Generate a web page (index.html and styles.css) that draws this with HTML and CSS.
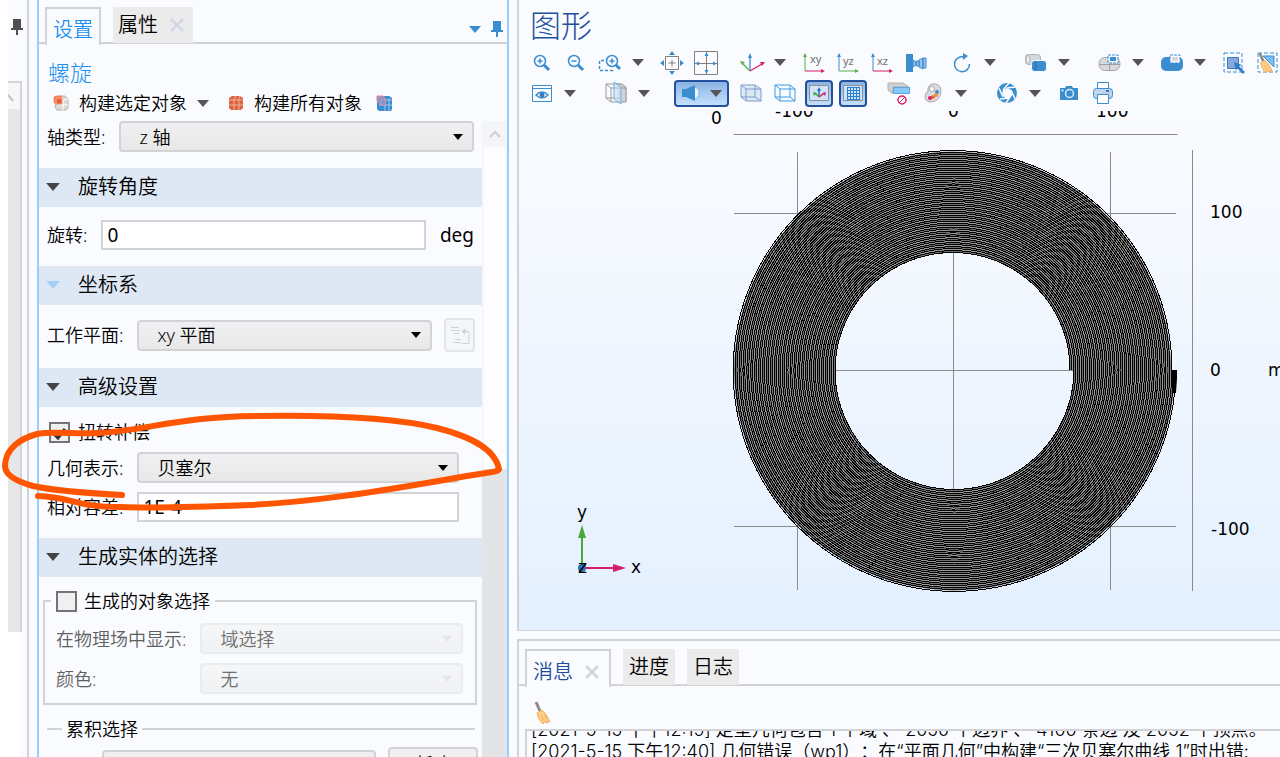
FILE: index.html
```html
<!DOCTYPE html>
<html lang="zh-CN">
<head>
    <meta charset="UTF-8">
    <meta name="viewport" content="width=device-width, initial-scale=1.0">
    <title>螺旋</title>
    <link rel="stylesheet" href="styles.css">
</head>
<body>

<svg class="defs" width="0" height="0">
    <symbol id="caret" viewBox="0 0 12 7"><path d="M0 0h12l-6 7z" fill="currentColor"/></symbol>
    <symbol id="pin" viewBox="0 0 12 16"><path d="M2 0h8v9h2v2H7v5H5v-5H0V9h2z" fill="currentColor"/></symbol>
    <symbol id="cross" viewBox="0 0 14 14"><path d="M1 1l12 12M13 1L1 13" stroke="#d0d8e4" stroke-width="2.5"/></symbol>
    <symbol id="broom" viewBox="0 0 20 24">
        <path d="M3 1l4 9" stroke="#8c8c8c" stroke-width="3"/>
        <path d="M4 12l5-3q5 4 8 12l-3-1 1 2-4-1-1 2q-5-4-6-11z" fill="#ffcf87" stroke="#f4b060"/>
        <path d="M8 14l3 6M11 13l3 5" stroke="#f4b060"/>
    </symbol>
</svg>

<div class="app">
    <aside class="side">
        <svg class="side-pin" width="12" height="16"><use href="#pin"/></svg>
        <div class="side-scroll">
            <svg width="12" height="26" viewBox="0 0 12 26"><path d="M0 12l5 6" stroke="#c4c4c6" stroke-width="2"/></svg>
        </div>
    </aside>

    <section class="settings">
        <div class="tabs">
            <button type="button" class="tab active blue">设置</button>
            <button type="button" class="tab">属性<svg width="14" height="14"><use href="#cross"/></svg></button>
            <div class="tab-tools">
                <svg width="12" height="7"><use href="#caret"/></svg>
                <svg width="12" height="16"><use href="#pin"/></svg>
            </div>
        </div>
        <h1>螺旋</h1>
        <div class="build-bar">
            <button type="button">
                <svg width="16" height="16" viewBox="0 0 16 16">
                    <path d="M5 1h7l3 3v9l-2 2H4l-2-3z" fill="#dadad6" stroke="#b4b4b0"/>
                    <path d="M6 10h9M10 5v10M10 5l5-1" stroke="#fff"/>
                    <path d="M1 2l2-1h6v8H3L1 8z" fill="#e86030" stroke="#f4a080"/>
                    <path d="M3 3h6M3 3v6" stroke="#f8b8a0"/>
                </svg>
                构建选定对象
                <svg class="gray" width="12" height="7"><use href="#caret"/></svg>
            </button>
            <button type="button">
                <svg width="16" height="16" viewBox="0 0 16 16">
                    <path d="M1 3l3-2h8l3 2v10l-2 2H3l-2-2z" fill="#dc6440"/>
                    <path d="M1 5h14M1 10h14M6 4v11M11 4v11M6 4l2-3M11 4l1-3" stroke="#f4ad98"/>
                </svg>
                构建所有对象
            </button>
            <button type="button" aria-label="显示">
                <svg width="16" height="16" viewBox="0 0 16 16">
                    <path d="M1 3l3-2h9l3 2v11l-1 2H3l-2-2z" fill="#3a8ed0"/>
                    <path d="M3 5h13M3 10h13M9 3v13M13 3v13" stroke="#9cc8ee"/>
                    <path d="M1 1h6l2 2v7H5L1 6z" fill="#6f9fd0" stroke="#f08098"/>
                    <path d="M1 1l4 3v6M5 4h4" stroke="#f08098" fill="none"/>
                </svg>
            </button>
        </div>

        <div class="scroller">
            <form class="form">
                <div class="row">
                    <label for="axis">轴类型:</label>
                    <select id="axis"><option>z 轴</option></select>
                </div>
                <h2><svg width="14" height="8"><use href="#caret"/></svg>旋转角度</h2>
                <div class="row">
                    <label for="rotation">旋转:</label>
                    <input type="text" id="rotation" value="0">
                    <span class="unit">deg</span>
                </div>
                <h2 class="collapsed"><svg width="14" height="8"><use href="#caret"/></svg>坐标系</h2>
                <div class="row">
                    <label for="plane">工作平面:</label>
                    <select id="plane"><option>xy 平面</option></select>
                    <button type="button" class="goto" aria-label="转到源" disabled>
                        <svg width="20" height="20" viewBox="0 0 20 20" fill="none" stroke="#d2d3d5">
                            <path d="M1 2.500h8M1 5.500h9M3 8.500h6M5 14.500h6M3 17.500h8M14 6.500h5v12h-7"/>
                            <path d="M15 4v5l-3-2.500z" fill="#d2d3d5"/>
                        </svg>
                    </button>
                </div>
                <h2><svg width="14" height="8"><use href="#caret"/></svg>高级设置</h2>
                <div class="row check">
                    <input type="checkbox" id="twist" checked>
                    <label for="twist">扭转补偿</label>
                </div>
                <div class="row short">
                    <label for="repr">几何表示:</label>
                    <select id="repr"><option>贝塞尔</option></select>
                </div>
                <div class="row short tight">
                    <label for="tol">相对容差:</label>
                    <input type="text" id="tol" value="1E-4">
                </div>
                <h2><svg width="14" height="8"><use href="#caret"/></svg>生成实体的选择</h2>
                <fieldset class="box">
                    <legend>
                        <input type="checkbox" id="objsel">
                        <label for="objsel">生成的对象选择</label>
                    </legend>
                    <div class="pair">
                        <label for="show">在物理场中显示:</label>
                        <select id="show" disabled><option>域选择</option></select>
                        <label for="color">颜色:</label>
                        <select id="color" disabled><option>无</option></select>
                    </div>
                </fieldset>
                <fieldset class="line">
                    <legend>累积选择</legend>
                    <div class="accum">
                        <select aria-label="贡献于"><option>无</option></select>
                        <button type="button">新建</button>
                    </div>
                </fieldset>
            </form>
            <div class="scrollbar">
                <div class="sb-up"><svg width="12" height="8" viewBox="0 0 12 8"><path d="M1 7l5-5 5 5" fill="none" stroke="#cfcfd1" stroke-width="2"/></svg></div>
                <div class="sb-thumb"></div>
            </div>
        </div>
    </section>

    <main class="main">
        <section class="graphics">
            <h1>图形</h1>
            <div class="toolbar">
                <button type="button" aria-label="放大"><svg width="18" height="18" viewBox="0 0 18 18" class="ln"><circle cx="7" cy="7" r="5.500"/><path d="M4.500 7h5M7 4.500v5"/><path d="M11 11l5 5" stroke-width="3"/></svg></button>
                <button type="button" aria-label="缩小"><svg width="18" height="18" viewBox="0 0 18 18" class="ln"><circle cx="7" cy="7" r="5.500"/><path d="M4.500 7h5"/><path d="M11 11l5 5" stroke-width="3"/></svg></button>
                <button type="button" aria-label="缩放框"><svg width="24" height="18" viewBox="0 0 24 18" class="ln"><path d="M6 6.500H1.500v10h13V14" stroke-dasharray="3 2"/><circle cx="14" cy="7" r="5.500"/><path d="M11.500 7h5M14 4.500v5"/><path d="M18 11l4 4" stroke-width="3"/></svg></button>
                <button type="button" class="menu" aria-label="更多"><svg width="12" height="7"><use href="#caret"/></svg></button>
                <button type="button" aria-label="切换"><svg width="24" height="24" viewBox="0 0 24 24"><path d="M12 0l3 4H9zM12 24l3-4H9zM0 12l4-3v6zM24 12l-4-3v6z" fill="#3a8ed0"/><path d="M5.500 5.500h13v13h-13zM8.500 12h7M12 8.500v7" fill="none" stroke="#808080"/></svg></button>
                <button type="button" aria-label="缩放到窗口大小"><svg width="24" height="24" viewBox="0 0 24 24"><path d="M.5.5h23v23H.5z" fill="none" stroke="#808080"/><path d="M12.500 1v22M1 12.500h22" stroke="#808080"/><path d="M12.500 1l2 4h-4zM12.500 23l2-4h-4zM1 12.500l4-2v4zM23 12.500l-4-2v4z" fill="#3a8ed0"/></svg></button>
                <i class="sep"></i>
                <button type="button" aria-label="默认视图"><svg width="26" height="20" viewBox="0 0 26 20"><path d="M11 18V3" stroke="#3a8ed0" stroke-width="1.300"/><path d="M11 0l2 5H9z" fill="#3a8ed0"/><path d="M11 18l-8-8" stroke="#58b04c" stroke-width="1.300"/><path d="M1 8l5 1-3 3z" fill="#58b04c"/><path d="M11 18l12-7" stroke="#d81e68" stroke-width="1.300"/><path d="M26 9l-3 4-2-4z" fill="#d81e68"/></svg></button>
                <button type="button" class="menu" aria-label="更多"><svg width="12" height="7"><use href="#caret"/></svg></button>
                <button type="button" aria-label="xy 视图"><svg width="22" height="20" viewBox="0 0 22 20"><path d="M2 18V3" stroke="#58b04c"/><path d="M2 0l2 4H0z" fill="#58b04c"/><path d="M2 18h17" stroke="#d81e68"/><path d="M22 18l-4 2v-4z" fill="#d81e68"/><text x="7" y="10">xy</text></svg></button>
                <button type="button" aria-label="yz 视图"><svg width="22" height="20" viewBox="0 0 22 20"><path d="M2 18V3" stroke="#3a8ed0"/><path d="M2 0l2 4H0z" fill="#3a8ed0"/><path d="M2 18h17" stroke="#58b04c"/><path d="M22 18l-4 2v-4z" fill="#58b04c"/><text x="6" y="12">yz</text></svg></button>
                <button type="button" aria-label="xz 视图"><svg width="22" height="20" viewBox="0 0 22 20"><path d="M2 18V3" stroke="#3a8ed0"/><path d="M2 0l2 4H0z" fill="#3a8ed0"/><path d="M2 18h17" stroke="#d81e68"/><path d="M22 18l-4 2v-4z" fill="#d81e68"/><text x="6" y="12">xz</text></svg></button>
                <button type="button" aria-label="相机"><svg width="20" height="18" viewBox="0 0 20 18"><path d="M0 0h7v18H0z" fill="#3a8ed0"/><path d="M7 6l3 2v3l-3 2zM10 7h3v5h-3zM13 6l4-2v11l-4-2zM17 4h3v10h-3z" fill="#9dc0ea" stroke="#3a8ed0"/></svg></button>
                <i class="sep"></i>
                <button type="button" aria-label="旋转"><svg width="18" height="20" viewBox="0 0 18 20"><path d="M11 4a7.500 7.500 0 1 0 5.500 7" fill="none" stroke="#3a8ed0" stroke-width="1.500"/><path d="M10 0l5 3-5 4z" fill="#3a8ed0"/></svg></button>
                <button type="button" class="menu" aria-label="更多"><svg width="12" height="7"><use href="#caret"/></svg></button>
                <i class="sep"></i>
                <button type="button" aria-label="选择"><svg width="22" height="18" viewBox="0 0 22 18"><rect x=".5" y=".5" width="15" height="10" rx="3" fill="#d8d9db" stroke="#b0b1b3"/><ellipse cx="3" cy="5.500" rx="2" ry="4" fill="#eee" stroke="#b0b1b3"/><rect x="6.500" y="6.500" width="15" height="11" rx="3" fill="#3a8ed0" stroke="#fafbff"/><path d="M10 8q2 4 0 8" stroke="#2468a8" fill="none"/></svg></button>
                <button type="button" class="menu" aria-label="更多"><svg width="12" height="7"><use href="#caret"/></svg></button>
                <i class="sep"></i>
                <button type="button" aria-label="隐藏"><svg width="24" height="18" viewBox="0 0 24 18"><rect x="1" y="3.500" width="21" height="13" rx="6" fill="#d8d9db" stroke="#a8a9ab"/><path d="M1 10.500h21M11.500 10.500v6" stroke="#a0a0a0"/><rect x="10" y="1" width="10" height="8" fill="#fafbff" stroke="#3a8ed0" stroke-dasharray="3 1"/><path d="M12 3h6v4h-6z" fill="#3a8ed0"/></svg></button>
                <button type="button" class="menu" aria-label="更多"><svg width="12" height="7"><use href="#caret"/></svg></button>
                <button type="button" aria-label="显示选定"><svg width="24" height="18" viewBox="0 0 24 18"><rect x="1" y="3" width="22" height="14" rx="5" fill="#3a8ed0"/><rect x="10" y="1" width="10" height="8" fill="#fafbff" stroke="#3a8ed0" stroke-dasharray="3 1"/><path d="M12 3h6v4h-6z" fill="#d8d9db"/></svg></button>
                <button type="button" class="menu" aria-label="更多"><svg width="12" height="7"><use href="#caret"/></svg></button>
                <button type="button" aria-label="框选"><svg width="22" height="22" viewBox="0 0 22 22"><path d="M1 1h18v19H1z" fill="none" stroke="#3a8ed0" stroke-dasharray="4 2"/><path d="M4.500 5.500h11v11h-11z" fill="#88a8dc" stroke="#3a78c0"/><path d="M11 10l8 3-3 1 6 6-2 2-6-6-1 3z" fill="#2c80c8"/></svg></button>
                <button type="button" aria-label="清除选择"><svg width="22" height="24" viewBox="0 0 22 24"><path d="M1 2h19v19H1z" fill="none" stroke="#3a8ed0" stroke-dasharray="4 2"/><path d="M6 5h11v11z" fill="#7cbcf0" stroke="#3a8ed0"/><use href="#broom" width="18" height="24"/></svg></button>
            </div>
            <div class="toolbar">
                <button type="button" aria-label="可见性"><svg width="20" height="17" viewBox="0 0 20 17"><path d="M.5.5h19v16H.5zM.5 3.500h19" fill="none" stroke="#3a8ed0"/><path d="M4 10q6-6 12 0-6 6-12 0z" fill="#fff" stroke="#3a8ed0" stroke-width="1.500"/><circle cx="10" cy="10" r="2.500" fill="#3a78b8"/></svg></button>
                <button type="button" class="menu" aria-label="更多"><svg width="12" height="7"><use href="#caret"/></svg></button>
                <i class="sep"></i>
                <button type="button" aria-label="裁剪"><svg width="22" height="22" viewBox="0 0 22 22"><path d="M11 1h6l5 4v15h-8z" fill="#d4d4d6"/><path d="M1 2h15l5 4v14H6l-5-4zM1 2l5 4h15M6 6v14M1 16h14" fill="none" stroke="#999"/><path d="M9 0l7 5v17l-7-5z" fill="#c8def4" fill-opacity=".6" stroke="#68b0ec"/></svg></button>
                <button type="button" class="menu" aria-label="更多"><svg width="12" height="7"><use href="#caret"/></svg></button>
                <i class="sep"></i>
                <button type="button" class="on wide" aria-label="场景光"><svg width="18" height="16" viewBox="0 0 18 16"><path d="M12 2q5 1 5 6t-5 6" fill="#eef6ff" stroke="#8cb8e8"/><path d="M0 4h4l9-4v16l-9-4H0z" fill="#3a8ed0"/></svg><svg width="12" height="7"><use href="#caret"/></svg></button>
                <button type="button" aria-label="透明"><svg width="22" height="18" viewBox="0 0 22 18"><path d="M1 1h14l6 4v12H6l-5-4z" fill="#dce8f6"/><path d="M1 1h14l6 4v12H6l-5-4zM1 1l5 4h15M6 5v12M1 13h14V1M15 13l6 4" fill="none" stroke="#7c9ccc"/></svg></button>
                <button type="button" aria-label="线框"><svg width="22" height="18" viewBox="0 0 22 18"><path d="M1 1h15l5 4v12H6l-5-4zM1 1l5 4h15M6 5v12M1 13h15V1M16 13l5 4" fill="none" stroke="#3a9ce4"/></svg></button>
                <button type="button" class="on" aria-label="显示轴方向"><svg width="20" height="18" viewBox="0 0 20 18"><path d="M.5 1.500h19v15H.5z" fill="#cfe4fb" stroke="#909090"/><path d="M10 13V6" stroke="#2c70b8" stroke-width="1.500"/><path d="M10 3l2 4H8z" fill="#2c70b8"/><path d="M10 13L6 9" stroke="#48a83c" stroke-width="1.500"/><path d="M4 8l4 1-3 3z" fill="#48a83c"/><path d="M10 13l4-3" stroke="#d81e68" stroke-width="1.500"/><path d="M17 8l-1 4-3-3z" fill="#d81e68"/></svg></button>
                <button type="button" class="on" aria-label="显示栅格"><svg width="20" height="18" viewBox="0 0 20 18"><path d="M.5 1.500h19v15H.5z" fill="#cfe4fb" stroke="#909090"/><path d="M4 3.500h12M4 6.500h12M4 9.500h12M4 12.500h12M4 15.500h12M4.500 3v13M7.500 3v13M10.500 3v13M13.500 3v13M16.500 3v13" stroke="#2c80d0"/></svg></button>
                <i class="sep"></i>
                <button type="button" aria-label="移除"><svg width="22" height="22" viewBox="0 0 22 22"><path d="M0 1h15l6 4H5v7l-5-4z" fill="#d0d0d2" stroke="#b0b0b2"/><path d="M5.500 5.500h16v6h-16z" fill="#86c8fa" stroke="#58a8e4"/><circle cx="14" cy="18" r="4" fill="#fff" stroke="#d81e68" stroke-width="1.500"/><path d="M11 21l6-6" stroke="#d81e68"/></svg></button>
                <button type="button" aria-label="颜色"><svg width="18" height="20" viewBox="0 0 18 20"><path d="M8 1q8-1 9 6 0 11-10 12-6 0-6-6 0-3 3-4-1-6 4-8z" fill="#dcdcde" stroke="#a8a8aa"/><circle cx="8" cy="6" r="2.500" fill="#fff" stroke="#aaa"/><circle cx="13" cy="9" r="2" fill="#3a8ed0"/><circle cx="12" cy="12" r="2" fill="#f09030"/><circle cx="9" cy="14" r="1.800" fill="#f05a28"/><circle cx="6" cy="15" r="2" fill="#d81e68"/></svg></button>
                <button type="button" class="menu" aria-label="更多"><svg width="12" height="7"><use href="#caret"/></svg></button>
                <i class="sep"></i>
                <button type="button" aria-label="快照"><svg width="20" height="20" viewBox="0 0 20 20"><circle cx="10" cy="10" r="10" fill="#3a8ed0"/><path d="M10 5l4 2 1 4-3 4-4 0-3-4 1-4z" fill="#fafbff"/><path d="M10 5L18 4M14 7l4 9M15 11l-6 9M12 15l-9 1M6 14L2 5M6 7l6-7" stroke="#fafbff" stroke-width="1.500"/></svg></button>
                <button type="button" class="menu" aria-label="更多"><svg width="12" height="7"><use href="#caret"/></svg></button>
                <button type="button" aria-label="图像"><svg width="18" height="14" viewBox="0 0 18 14"><path d="M0 2h5l1-2h6l1 2h5v12H0z" fill="#3a8ed0"/><circle cx="9.500" cy="7.500" r="4" fill="#3a8ed0" stroke="#d8ecfc" stroke-width="1.500"/><circle cx="2.500" cy="4.500" r="1" fill="#fff"/></svg></button>
                <button type="button" aria-label="打印"><svg width="20" height="22" viewBox="0 0 20 22"><path d="M4.500 8V.5h11V8" fill="#fff" stroke="#3a8ed0"/><rect x=".5" y="6.500" width="19" height="10" rx="3" fill="#c0d4ee" stroke="#3a8ed0"/><path d="M4.500 12.500h11v9h-11z" fill="#fff" stroke="#3a8ed0"/><path d="M13 8h3v2h-3z" fill="#3a78b8"/></svg></button>
            </div>
            <svg class="plot">
                <g class="grid">
                    <path d="M214.500 23.500h444M673.500 39v441M215 102.500h442M215 415.500h442M215 259.500h442"/>
                    <path d="M278.500 41v438M434.500 41v438M591.500 41v438"/>
                </g>
                <path id="band" fill="#707070"/>
                <path id="coil" fill="none" stroke="#000" shape-rendering="crispEdges"/>
                <path id="gleam" fill="none" stroke="#d8d8d8" shape-rendering="crispEdges"/>
                <path d="M653 259h5v8l-1 15h-4z"/>
                <g class="ticks">
                    <text x="192" y="13">0</text>
                    <text x="256" y="6">-100</text>
                    <text x="429" y="6">0</text>
                    <text x="577" y="6">100</text>
                    <text x="691" y="107">100</text>
                    <text x="691" y="265">0</text>
                    <text x="692" y="424">-100</text>
                    <text x="749" y="265">m</text>
                    <text x="58" y="407">y</text>
                    <text x="112" y="462">x</text>
                </g>
                <path d="M63 456v-31" stroke="#48a83c" stroke-width="2"/>
                <path d="M63 414l4 13h-8z" fill="#48a83c"/>
                <path d="M63 457h33" stroke="#d81e68" stroke-width="2"/>
                <path d="M107 457l-13 4v-8z" fill="#d81e68"/>
                <circle cx="63" cy="457" r="4" fill="#2c70b8"/>
                <text class="z" x="59" y="462">z</text>
            </svg>
        </section>

        <section class="messages">
            <div class="tabs">
                <button type="button" class="tab active navy">消息<svg width="14" height="14"><use href="#cross"/></svg></button>
                <button type="button" class="tab">进度</button>
                <button type="button" class="tab">日志</button>
            </div>
            <button type="button" class="clear" aria-label="清除"><svg width="20" height="24"><use href="#broom"/></svg></button>
            <div class="log">
                <p>[2021-5-15 下午12:19] 定型几何包含 1 个域 、 2050 个边界 、 4100 条边 及 2052 个顶点。</p>
                <p>[2021-5-15 下午12:40] 几何错误（wp1）：在“平面几何”中构建“三次贝塞尔曲线 1”时出错:</p>
            </div>
        </section>
    </main>
</div>

<svg class="mark" width="510" height="530">
    <path d="M122 495C85 493 55 491 33 486C15 481 5 475 5 466C5 448 22 438 37 434C50 431 75 434 97 433C145 431 180 416 260 416C330 415 395 418 437 428C480 439 496 453 499 469C499 472 490 472 450 479C370 493 310 502 250 505C200 507 150 508 120 507C75 507 72 497 38 496"/>
</svg>

<script src="script.js"></script>
</body>
</html>
```
FILE: styles.css
```css
* {
    box-sizing: border-box;
}
body {
    margin: 0;
    background: #fafbff;
    color: #000;
    font-family: "Noto Sans", "Noto Sans CJK SC", sans-serif;
    font-size: 18px;
    line-height: 24px;
    font-weight: 350;
}
button,
input,
select {
    font: inherit;
    color: inherit;
}
button {
    border: none;
    background: none;
    padding: 0;
}
svg {
    flex: none;
}
h1,
h2,
p {
    margin: 0;
    font-weight: inherit;
}
h1 {
    font-weight: 300;
}
.defs {
    position: absolute;
}
.app {
    display: flex;
    gap: 8px;
    height: 100vh;
    overflow: hidden;
}

/* strip on the far left */
.side {
    width: 29px;
    flex: none;
    border-left: 8px solid #fff;
    border-right: 2px solid #d2d3d6;
    display: flex;
    flex-direction: column;
}
.side-pin {
    color: #505050;
    margin: 19px 3px 46px;
}
.side-scroll {
    width: 14px;
    height: 551px;
    background: #e7e7e7;
    border-top: 2px solid #d2d3d6;
    border-right: 2px solid #d2d3d6;
}
.side-scroll svg {
    display: block;
    background: #f7f7f8;
}
.side::after {
    content: "";
    flex: 1;
    width: 12px;
    background: #fff;
}

/* tabs */
.tabs {
    display: flex;
    gap: 12px;
    align-items: flex-start;
    border-bottom: 2px solid #d2d3d6;
    padding: 7px 4px 0 6px;
    height: 44px;
}
.tab {
    display: flex;
    align-items: center;
    gap: 12px;
    height: 36px;
    padding: 0 5px;
    background: #ebebeb;
    font-size: 20px;
}
.tab.active {
    height: 38px;
    padding: 6px 6px 0;
    background: #fafbff;
    border: 2px solid #d2d3d6;
    border-bottom: none;
}
.tab svg {
    margin-right: 4px;
}
.blue {
    color: #1e90f0;
}
.navy {
    color: #1e4f9c;
}
.tab-tools {
    display: flex;
    align-items: center;
    gap: 10px;
    margin-left: auto;
    padding-top: 14px;
    color: #3a8ed0;
}

/* settings */
.settings {
    width: 472px;
    flex: none;
    display: flex;
    flex-direction: column;
    border-left: 2px solid #99cdfb;
    border-right: 2px solid #99cdfb;
}
.settings h1 {
    padding: 12px 9px 0;
    font-size: 22px;
    line-height: 32px;
    color: #1e90f0;
}
.build-bar {
    display: flex;
    gap: 19px;
    padding: 0 15px 3px 14px;
    height: 33px;
    align-items: center;
}
.build-bar button {
    display: flex;
    align-items: center;
    gap: 10px;
}
.build-bar button + button + button {
    margin-left: -5px;
}
.gray {
    color: #555;
}
.scroller {
    flex: 1;
    display: flex;
    min-height: 0;
    overflow: hidden;
}
.form {
    flex: 1;
    min-width: 0;
}
.row {
    display: flex;
    align-items: center;
    gap: 14px;
    padding: 0 8px;
    margin: 13px 0 16px;
}
.row:first-child {
    margin-top: 0;
}
.row.check {
    gap: 8px;
    margin: 13px 0 8px;
    padding-left: 10px;
}
.row.short {
    padding-right: 23px;
    margin: 0 0 9px;
}
.row.tight {
    margin-bottom: 16px;
}
select,
input[type="text"] {
    flex: 1;
    min-width: 0;
    height: 31px;
    border: 2px solid #d2d3d6;
    border-radius: 0;
    background: #fff;
    padding: 0 4px;
}
input[type="text"] {
    height: 30px;
    font-size: 19px;
    font-weight: 400;
}
.unit {
    font-size: 19px;
    font-weight: 400;
}
select {
    appearance: none;
    padding: 0 18px;
    border-radius: 4px;
    background: url("data:image/svg+xml,%3Csvg xmlns='http://www.w3.org/2000/svg' width='10' height='6'%3E%3Cpath d='M0 0h10l-5 6z'/%3E%3C/svg%3E") no-repeat right 9px center, linear-gradient(#f0f0f2, #e8e8e8);
}
select:disabled {
    color: #707070;
    opacity: 1;
    border-color: #ebecee;
    background: url("data:image/svg+xml,%3Csvg xmlns='http://www.w3.org/2000/svg' width='10' height='6'%3E%3Cpath d='M0 0h10l-5 6z' fill='%23e4e5e7'/%3E%3C/svg%3E") no-repeat right 9px center, linear-gradient(#f5f6f8, #f1f2f3);
}
.form h2 {
    display: flex;
    align-items: center;
    gap: 18px;
    height: 39px;
    padding: 0 7px 1px;
    background: #dee8f4;
    font-size: 20px;
}
.form h2 svg {
    color: #454545;
}
.form h2.collapsed svg {
    color: #a4d0f8;
}
.goto {
    width: 31px;
    height: 34px;
    margin: 0 -1px 0 -2px;
    border: 2px solid #e4e5e7;
    border-radius: 4px;
    background: #f5f6f8;
    display: flex;
    align-items: center;
    justify-content: center;
}
input[type="checkbox"] {
    appearance: none;
    flex: none;
    width: 21px;
    height: 21px;
    margin: 0;
    border: 2px solid #747474;
    background: #f0f0f0;
}
input[type="checkbox"]:checked {
    background: #f0f0f0 url("data:image/svg+xml,%3Csvg xmlns='http://www.w3.org/2000/svg' width='15' height='15'%3E%3Cpath d='M2 9l4 4 7-9' fill='none' stroke='%23333' stroke-width='3'/%3E%3C/svg%3E") no-repeat center;
}
fieldset {
    margin: 0;
    min-width: 0;
}
legend {
    display: flex;
    align-items: center;
    gap: 7px;
    padding: 0 5px;
}
.box {
    margin: 12px 5px 0 4px;
    padding: 10px 12px 9px 6px;
    border: 2px solid #d2d3d6;
}
.pair {
    display: grid;
    grid-template-columns: auto 1fr;
    gap: 9px 14px;
    align-items: center;
    padding-left: 5px;
    color: #606060;
}
.line {
    margin: 12px 7px 0 8px;
    padding: 6px 0 0;
    border: none;
}
.line legend {
    width: 100%;
    padding: 0;
}
.line legend::before,
.line legend::after {
    content: "";
    width: 15px;
    height: 2px;
    background: #d2d3d6;
}
.line legend::before {
    margin-right: -3px;
}
.line legend::after {
    flex: 1;
    margin-left: -3px;
}
.accum {
    display: flex;
    gap: 12px;
    padding-left: 55px;
    margin-right: -3px;
}
.accum button {
    width: 90px;
    height: 34px;
    border: 2px solid #d2d3d6;
    border-radius: 4px;
    background: #f0f0f2;
}
.accum select {
    margin-top: 3px;
}
.scrollbar {
    width: 25px;
    background: #e3e4e6;
}
.sb-up {
    display: flex;
    align-items: center;
    justify-content: center;
    height: 26px;
    background: #f4f5f7;
}
.sb-thumb {
    height: 322px;
    border: 2px solid #f6f7f9;
    border-width: 0 2px;
    background: #fdfdff;
}

/* right part */
.main {
    flex: 1;
    min-width: 0;
    display: flex;
    flex-direction: column;
    gap: 8px;
}
.graphics {
    flex: 1;
    min-height: 0;
    display: flex;
    flex-direction: column;
    border-left: 2px solid #d2d3d6;
    border-bottom: 1px solid #d2d3d6;
}
.graphics h1 {
    padding: 4px 11px 0;
    font-size: 31px;
    line-height: 43px;
    color: #1e4f9c;
}
.toolbar {
    flex: none;
    display: flex;
    align-items: center;
    height: 31px;
    padding-left: 6px;
    overflow: hidden;
}
.toolbar + .toolbar {
    height: 30px;
}
.toolbar button {
    flex: none;
    display: flex;
    align-items: center;
    justify-content: center;
    width: 34px;
    height: 27px;
}
.toolbar .menu {
    width: 28px;
    padding-right: 6px;
    color: #555;
}
.toolbar .on {
    width: 28px;
    margin: 0 3px;
    border: 2px solid #24509c;
    border-radius: 4px;
    background: linear-gradient(#8ab4e4, #c4e0fc);
}
.toolbar .on.wide {
    width: 55px;
    gap: 10px;
    margin: 0 5px 0 1px;
    color: #555;
}
.toolbar svg {
    overflow: visible;
}
.toolbar text {
    font: 11px "Noto Sans", sans-serif;
    fill: #707070;
}
.sep {
    flex: none;
    width: 12px;
}
.ln {
    fill: none;
    stroke: #3a8ed0;
    stroke-width: 1.5px;
}
.plot {
    display: block;
    flex: 1;
    min-height: 0;
    width: 100%;
    margin-top: 3px;
    background: linear-gradient(#fafbff, #e4f0ff);
}
.grid {
    stroke: #8a8a8a;
}
.ticks,
.z {
    font: 17px "DejaVu Sans", sans-serif;
}

/* messages */
.messages {
    flex: none;
    height: 118px;
    display: flex;
    flex-direction: column;
    border-left: 2px solid #d2d3d6;
    border-top: 2px solid #d2d3d6;
    overflow: hidden;
}
.messages .tabs {
    flex: none;
    height: 45px;
    padding-top: 8px;
}
.messages .tab {
    padding: 0 6px;
}
.messages .tab.active {
    padding: 6px 6px 0;
}
.clear {
    flex: none;
    height: 43px;
    width: 36px;
    padding: 10px 0 0 14px;
}
.clear svg {
    display: block;
}
.log {
    flex: 1;
    min-height: 0;
    overflow: hidden;
    margin-left: 6px;
    padding-left: 4px;
    border: 2px solid #d2d3d6;
    border-width: 2px 0 0 2px;
    white-space: nowrap;
    font-family: Inter, "Noto Sans CJK SC", sans-serif;
    text-spacing-trim: space-all;
    line-height: 22px;
}
.log p:first-child {
    margin-top: -12px;
}

/* hand drawn circle over the panel */
.mark {
    position: absolute;
    left: 0;
    top: 0;
    pointer-events: none;
}
.mark path {
    fill: none;
    stroke: #ff5500;
    stroke-width: 6px;
    stroke-linecap: round;
}
```
FILE: script.js
```js
const cx = 434.5;
const cy = 259;
const r0 = 116.5;
const turns = 26;
const pitch = 3.92;

// counter-clockwise spiral starting on the x axis
function spiral(start, n) {
    const pts = [];
    for (let i = 0; i <= n * 120; i++) {
        const a = i / 120 * 2 * Math.PI;
        const r = start + pitch * i / 120;
        pts.push((cx + r * Math.cos(a)).toFixed(2) + ' ' + (cy - r * Math.sin(a)).toFixed(2));
    }
    return pts;
}

const inner = spiral(r0, 1);
const outer = spiral(r0 + pitch * (turns - 0.25), 1);
document.getElementById('band').setAttribute('d', 'M' + outer.join('L') + 'ZM' + inner.reverse().join('L') + 'Z');
document.getElementById('coil').setAttribute('d', 'M' + spiral(r0, turns + 1).join('L') + 'M' + spiral(r0 + 1.9, turns).join('L'));
document.getElementById('gleam').setAttribute('d', 'M' + spiral(r0 + 3, turns - 1).join('L'));
document.getElementById('gleam').setAttribute('stroke-width', '0.4');
```
